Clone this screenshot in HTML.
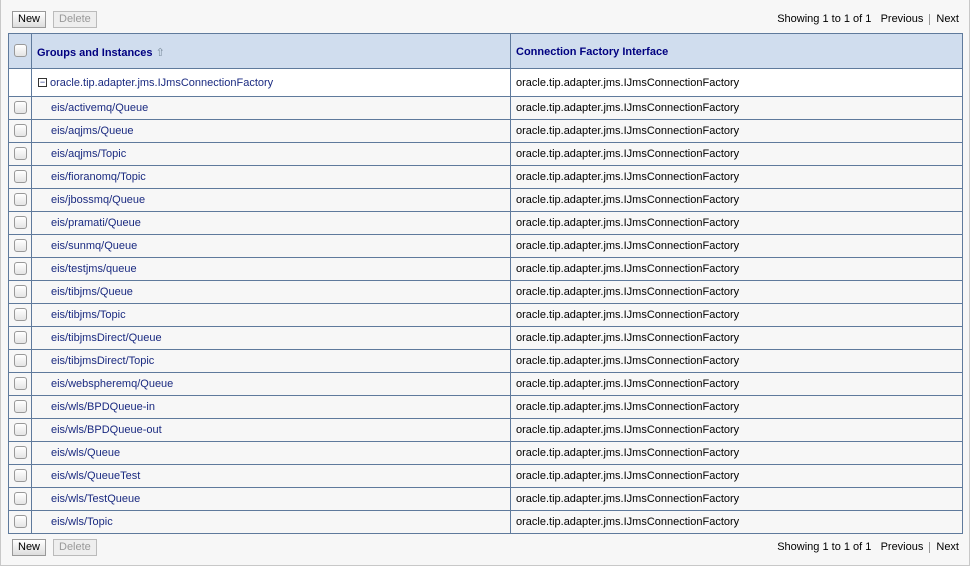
<!DOCTYPE html>
<html><head><style>
body{margin:0;width:970px;height:567px;overflow:hidden;background:#fff;font-family:"Liberation Sans",Arial,sans-serif;font-size:11px;}
.wrap{position:absolute;left:0;top:0;width:968px;height:565px;background:#f7f7f7;border-left:1px solid #c8c8c8;border-bottom:1px solid #c8c8c8;border-right:1px solid #c8c8c8;}
.btn{position:absolute;height:15px;line-height:15px;padding:0 5px;border:1px solid #999;background:linear-gradient(#fff,#ddd);font-size:11px;color:#000;}
.btn.dis{color:#999;border-color:#bbb;background:#eee}
.pg{position:absolute;right:10px;font-size:11px;color:#000}
.pg .sep{display:inline-block;width:1px;height:11px;background:#999;vertical-align:middle;margin:0 6px}
table{position:absolute;left:7px;top:33px;width:955px;border-collapse:collapse;}
td,th{border:1px solid #5f7a9c;padding:0;text-align:left;vertical-align:middle}
th{background:#d0ddee;height:32px;color:#000080;font-weight:bold;font-size:11px;padding-left:5px;padding-top:2px}
th.cb{padding:0;width:22px}
td{height:22px;color:#000;background:#f7f7f7}
td.n{color:#1a2a80;padding-left:19px}
td.i{padding-left:5px}
tr.g td{background:#fff;height:27px}
.box{display:block;margin:-2px auto 0;width:11px;height:11px;border:1px solid #999;border-radius:3px;background:linear-gradient(#fff,#e4e4e4)}
</style></head><body><div class="wrap">
<div class="btn" style="left:11px;top:11px">New</div>
<div class="btn dis" style="left:52px;top:11px">Delete</div>
<div class="pg" style="top:13px">Showing 1 to 1 of 1 &nbsp; Previous<span class="sep"></span>Next</div>
<table>
<tr><th class="cb"><span class="box"></span></th><th style="width:473px">Groups and Instances <span style="color:#789;font-weight:normal">&#8679;</span></th><th>Connection Factory Interface</th></tr>
<tr class="g"><td></td><td class="n" style="padding-left:6px"><span style="display:inline-block;width:7px;height:7px;border:1px solid #333;line-height:6px;font-size:9px;text-align:center;vertical-align:middle;margin-right:3px">−</span>oracle.tip.adapter.jms.IJmsConnectionFactory</td><td class="i">oracle.tip.adapter.jms.IJmsConnectionFactory</td></tr>
<tr><td><span class="box"></span></td><td class="n">eis/activemq/Queue</td><td class="i">oracle.tip.adapter.jms.IJmsConnectionFactory</td></tr>
<tr><td><span class="box"></span></td><td class="n">eis/aqjms/Queue</td><td class="i">oracle.tip.adapter.jms.IJmsConnectionFactory</td></tr>
<tr><td><span class="box"></span></td><td class="n">eis/aqjms/Topic</td><td class="i">oracle.tip.adapter.jms.IJmsConnectionFactory</td></tr>
<tr><td><span class="box"></span></td><td class="n">eis/fioranomq/Topic</td><td class="i">oracle.tip.adapter.jms.IJmsConnectionFactory</td></tr>
<tr><td><span class="box"></span></td><td class="n">eis/jbossmq/Queue</td><td class="i">oracle.tip.adapter.jms.IJmsConnectionFactory</td></tr>
<tr><td><span class="box"></span></td><td class="n">eis/pramati/Queue</td><td class="i">oracle.tip.adapter.jms.IJmsConnectionFactory</td></tr>
<tr><td><span class="box"></span></td><td class="n">eis/sunmq/Queue</td><td class="i">oracle.tip.adapter.jms.IJmsConnectionFactory</td></tr>
<tr><td><span class="box"></span></td><td class="n">eis/testjms/queue</td><td class="i">oracle.tip.adapter.jms.IJmsConnectionFactory</td></tr>
<tr><td><span class="box"></span></td><td class="n">eis/tibjms/Queue</td><td class="i">oracle.tip.adapter.jms.IJmsConnectionFactory</td></tr>
<tr><td><span class="box"></span></td><td class="n">eis/tibjms/Topic</td><td class="i">oracle.tip.adapter.jms.IJmsConnectionFactory</td></tr>
<tr><td><span class="box"></span></td><td class="n">eis/tibjmsDirect/Queue</td><td class="i">oracle.tip.adapter.jms.IJmsConnectionFactory</td></tr>
<tr><td><span class="box"></span></td><td class="n">eis/tibjmsDirect/Topic</td><td class="i">oracle.tip.adapter.jms.IJmsConnectionFactory</td></tr>
<tr><td><span class="box"></span></td><td class="n">eis/webspheremq/Queue</td><td class="i">oracle.tip.adapter.jms.IJmsConnectionFactory</td></tr>
<tr><td><span class="box"></span></td><td class="n">eis/wls/BPDQueue-in</td><td class="i">oracle.tip.adapter.jms.IJmsConnectionFactory</td></tr>
<tr><td><span class="box"></span></td><td class="n">eis/wls/BPDQueue-out</td><td class="i">oracle.tip.adapter.jms.IJmsConnectionFactory</td></tr>
<tr><td><span class="box"></span></td><td class="n">eis/wls/Queue</td><td class="i">oracle.tip.adapter.jms.IJmsConnectionFactory</td></tr>
<tr><td><span class="box"></span></td><td class="n">eis/wls/QueueTest</td><td class="i">oracle.tip.adapter.jms.IJmsConnectionFactory</td></tr>
<tr><td><span class="box"></span></td><td class="n">eis/wls/TestQueue</td><td class="i">oracle.tip.adapter.jms.IJmsConnectionFactory</td></tr>
<tr><td><span class="box"></span></td><td class="n">eis/wls/Topic</td><td class="i">oracle.tip.adapter.jms.IJmsConnectionFactory</td></tr>
</table>
<div class="btn" style="left:11px;top:539px">New</div>
<div class="btn dis" style="left:52px;top:539px">Delete</div>
<div class="pg" style="top:541px">Showing 1 to 1 of 1 &nbsp; Previous<span class="sep"></span>Next</div>
</div></body></html>
